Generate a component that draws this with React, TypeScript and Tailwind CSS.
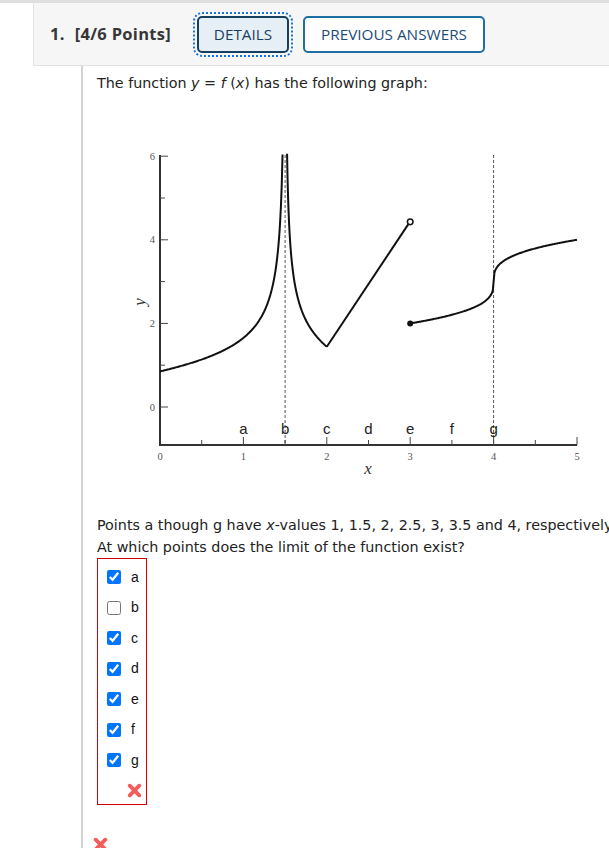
import React from "react";

// graph coordinates -> page pixels
const X = (x: number) => 160 + 83.4 * x;
const Y = (y: number) => 407 - 41.8 * y;

function curve(f: (x: number) => number, from: number, to: number, steps = 80) {
  const pts: string[] = [];
  for (let i = 0; i <= steps; i++) {
    const x = from + ((to - from) * i) / steps;
    pts.push(`${X(x).toFixed(2)},${Y(f(x)).toFixed(2)}`);
  }
  return "M" + pts.join(" L");
}

const cbrt = (v: number) => Math.sign(v) * Math.pow(Math.abs(v), 1 / 3);

const options = [
  { label: "a", checked: true },
  { label: "b", checked: false },
  { label: "c", checked: true },
  { label: "d", checked: true },
  { label: "e", checked: true },
  { label: "f", checked: true },
  { label: "g", checked: true },
];

function RedX({ className }: { className?: string }) {
  return (
    <svg viewBox="0 0 16 16" className={className}>
      <path d="M3.5 3.5 L12.5 12.5 M12.5 3.5 L3.5 12.5" stroke="#f45b5b" strokeWidth="3.6" strokeLinecap="round" fill="none" />
    </svg>
  );
}

function Graph() {
  const leftF = (x: number) => 0.034 + 1 / Math.sqrt(1.5 - x) + 0.205 * x;
  const midF = (x: number) => 0.484 + 0.86 / Math.sqrt(x - 1.5) - 0.52 * (x - 1.5);
  const left = curve(leftF, 0, 1.4693, 160);
  const mid = curve(midF, 1.5237, 2, 160);
  const line = `M${X(2)},${Y(midF(2))} L${X(3) - 2},${Y(4.43) + 2.5}`;
  const right = curve((x) => 3 + cbrt(x - 4), 3, 5, 200);
  const serif = { fontFamily: '"Liberation Serif", "DejaVu Serif", serif' };

  return (
    <svg width="512" height="345" viewBox="97 135 512 345" className="block">
      {/* dashed guides */}
      <line x1={X(1.5)} y1="155" x2={X(1.5)} y2="445" stroke="#555" strokeWidth="1" strokeDasharray="3 2" />
      <line x1={X(4)} y1="155" x2={X(4)} y2="445" stroke="#555" strokeWidth="1" strokeDasharray="3 2" />

      {/* axes */}
      <path d="M160 155 L160 445 L577 445" stroke="#333" strokeWidth="2" fill="none" />
      {[0, 1, 2, 3, 4, 5, 6].map((v) => (
        <line key={"y" + v} x1="160" y1={Y(v)} x2={v % 2 === 0 ? 168 : 165} y2={Y(v)} stroke="#444" strokeWidth="1" />
      ))}
      {[0.5, 1, 1.5, 2, 2.5, 3, 3.5, 4, 4.5, 5].map((v) => (
        <line key={"x" + v} x1={X(v)} y1="445" x2={X(v)} y2={Number.isInteger(v) ? 437 : 440} stroke="#444" strokeWidth="1" />
      ))}
      {[0, 2, 4, 6].map((v) => (
        <text key={"yl" + v} x="155" y={Y(v) + 3.5} textAnchor="end" fontSize="10.5" fill="#555" style={serif}>
          {v}
        </text>
      ))}
      {[0, 1, 2, 3, 4, 5].map((v) => (
        <text key={"xl" + v} x={X(v)} y="460" textAnchor="middle" fontSize="10.5" fill="#555" style={serif}>
          {v}
        </text>
      ))}
      <text x="368" y="474" textAnchor="middle" fontSize="17" fontStyle="italic" fill="#333" style={serif}>
        x
      </text>
      <text x="0" y="0" transform="translate(145 302) rotate(-90)" textAnchor="middle" fontSize="17" fontStyle="italic" fill="#333" style={serif}>
        y
      </text>

      {/* point letters */}
      {["a", "b", "c", "d", "e", "f", "g"].map((l, i) => (
        <text key={l} x={X(1 + i * 0.5)} y="434" textAnchor="middle" fontSize="15" fill="#222" style={{ fontFamily: '"Liberation Sans", Arial, sans-serif' }}>
          {l}
        </text>
      ))}

      {/* function */}
      <g stroke="#111" strokeWidth="2" fill="none" strokeLinejoin="round">
        <path d={left} />
        <path d={mid} />
        <path d={line} />
        <path d={right} />
      </g>
      <circle cx={X(3)} cy={Y(4.43)} r="2.8" fill="#fff" stroke="#111" strokeWidth="1.5" />
      <circle cx={X(3)} cy={Y(2)} r="3" fill="#111" />
    </svg>
  );
}

export default function App() {
  const body = { fontFamily: '"DejaVu Sans", Verdana, sans-serif' };
  return (
    <div className="w-[609px] h-[848px] overflow-hidden bg-white relative" style={{ fontFamily: '"Open Sans", "Noto Sans", sans-serif' }}>
      <div className="h-[3px] bg-[#dedede]" />
      <div className="ml-[33px] h-[63px] bg-[#f6f6f6] border-l border-b border-[#e2e2e2] flex items-center">
        <span className="ml-[16px] w-[122px] text-[16.5px] font-bold text-[#363636] whitespace-nowrap tracking-[0.3px]">
          1.<span className="ml-[10px]">[4/6 Points]</span>
        </span>
        <button className="ml-[25px] w-[92px] h-[37px] rounded-[5px] border-2 border-[#163f5e] bg-[#e7eff6] text-[15.3px] text-[#1c3f5e] outline-2 outline-dotted outline-[#1a73d9] outline-offset-[2px]">
          DETAILS
        </button>
        <button className="ml-[14px] w-[182px] h-[37px] rounded-[5px] border-2 border-[#1f6fa5] bg-white text-[15.3px] text-[#1d4c78]">
          PREVIOUS ANSWERS
        </button>
      </div>

      <div className="ml-[81px] border-l-2 border-[#d4d4d4] pl-[14px] min-h-[800px] whitespace-nowrap">
        <p className="pt-[6px] text-[14.3px] leading-[22px] text-[#222]" style={body}>
          The function <i>y</i> = <i>f</i> (<i>x</i>) has the following graph:
        </p>

        <div className="mt-[41px]">
          <Graph />
        </div>

        <div className="mt-[34px] text-[14.3px] leading-[22px] text-[#222]" style={body}>
          <p>
            Points a though g have <i>x</i>-values 1, 1.5, 2, 2.5, 3, 3.5 and 4, respectively.
          </p>
          <p>At which points does the limit of the function exist?</p>
        </div>

        <div className="w-[50px] h-[247px] border border-[#d40000] pt-[3px]" style={{ fontFamily: '"Liberation Sans", Arial, sans-serif' }}>
          {options.map((o) => (
            <label key={o.label} className="h-[30.5px] flex items-center">
              <input type="checkbox" defaultChecked={o.checked} className="ml-[9px] w-[14px] h-[14px] m-0 accent-[#0075ff]" />
              <span className="ml-[10px] text-[14px] text-[#111]">{o.label}</span>
            </label>
          ))}
          <div className="flex justify-end pr-[3px] mt-[6px]">
            <RedX className="w-[17px] h-[17px]" />
          </div>
        </div>

        <RedX className="mt-[31px] -ml-[5px] w-[17px] h-[17px]" />
      </div>
    </div>
  );
}
